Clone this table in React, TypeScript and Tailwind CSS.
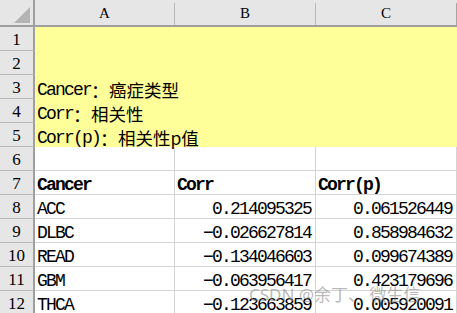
import React from 'react'

const mono = "font-['Liberation_Mono','Noto_Sans_CJK_SC',monospace] text-[18px] leading-[18px] tracking-[-1.8px] text-black"
const serif = "font-['Liberation_Serif','Noto_Sans_CJK_SC',serif] text-black"

const rows = [
  {n: 8, cancer: 'ACC', corr: '0.214095325', p: '0.061526449'},
  {n: 9, cancer: 'DLBC', corr: '−0.026627814', p: '0.858984632'},
  {n: 10, cancer: 'READ', corr: '−0.134046603', p: '0.099674389'},
  {n: 11, cancer: 'GBM', corr: '−0.063956417', p: '0.423179696'},
  {n: 12, cancer: 'THCA', corr: '−0.123663859', p: '0.005920091'}
]

// legend lines in the yellow block
const notes: [string, string][] = [
  ['Cancer', '癌症类型'],
  ['Corr', '相关性'],
  ['Corr(p)', '相关性p值']
]

const RowHead = ({n}: {n: number}) => (
  <div className={`h-[24px] bg-[#e6e6e6] border-r-2 border-b border-r-[#9f9f9f] border-b-[#b9b9b9] flex items-center justify-center pt-[2px] text-[17px] leading-none ${serif}`}>
    {n}
  </div>
)

const ColHead = ({label, last}: {label: string; last?: boolean}) => (
  <div className="h-[27px] bg-[#e6e6e6] border-b-2 border-[#9f9f9f] pt-[3px]">
    <div className={`h-full border-r ${last ? 'border-[#a6a6a6]' : 'border-[#b9b9b9]'} flex items-center justify-center pb-[2px] text-[15px] leading-none ${serif}`}>
      {label}
    </div>
  </div>
)

const Cell = ({children, right, bold}: {children?: React.ReactNode; right?: boolean; bold?: boolean}) => (
  <div
    className={`h-[24px] border-r border-b border-[#d4d4d4] flex items-end whitespace-nowrap ${right ? 'justify-end pr-[4px]' : 'pl-[2px]'} ${bold ? 'font-bold tracking-[-0.9px]' : ''} ${mono}`}
  >
    {children}
  </div>
)

export default function App() {
  return (
    <div className="relative w-[457px] h-[313px] overflow-hidden bg-white">
      <div className="grid grid-cols-[35px_140px_141px_141px]">
        <div className="h-[27px] bg-[#e6e6e6] border-r-2 border-b-2 border-[#9f9f9f] flex items-end justify-end pr-[3px] pb-[2px]">
          <svg width="16" height="16" viewBox="0 0 16 16">
            <polygon points="16,0 16,16 0,16" fill="#b4b4b4" />
          </svg>
        </div>
        <ColHead label="A" />
        <ColHead label="B" />
        <ColHead label="C" last />

        <RowHead n={1} />
        <div className="col-span-3 h-[24px] bg-[#ffff99]" />
        <RowHead n={2} />
        <div className="col-span-3 h-[24px] bg-[#ffff99]" />
        {notes.map(([en, zh], i) => (
          <React.Fragment key={en}>
            <RowHead n={i + 3} />
            <div className={`col-span-3 h-[24px] bg-[#ffff99] flex items-end pl-[2px] whitespace-nowrap ${mono}`}>
              <span>{en}</span>
              <span className="inline-block w-[18px] tracking-normal font-['Noto_Sans_CJK_SC',sans-serif]">：</span>
              <span className="tracking-normal text-[17.5px] font-['Noto_Sans_CJK_SC',sans-serif]">{zh}</span>
            </div>
          </React.Fragment>
        ))}

        <RowHead n={6} />
        <Cell />
        <Cell />
        <Cell />

        <RowHead n={7} />
        <Cell bold>Cancer</Cell>
        <Cell bold>Corr</Cell>
        <Cell bold>Corr(p)</Cell>

        {rows.map(r => (
          <React.Fragment key={r.n}>
            <RowHead n={r.n} />
            <Cell>{r.cancer}</Cell>
            <Cell right>{r.corr}</Cell>
            <Cell right>{r.p}</Cell>
          </React.Fragment>
        ))}
      </div>

      <div className="absolute left-[249px] top-[282px] whitespace-nowrap font-['Noto_Sans','Noto_Sans_CJK_SC',sans-serif] text-[17px] text-[#8a8a8a]/60">
        CSDN @余丁、 微生信
      </div>
    </div>
  )
}
